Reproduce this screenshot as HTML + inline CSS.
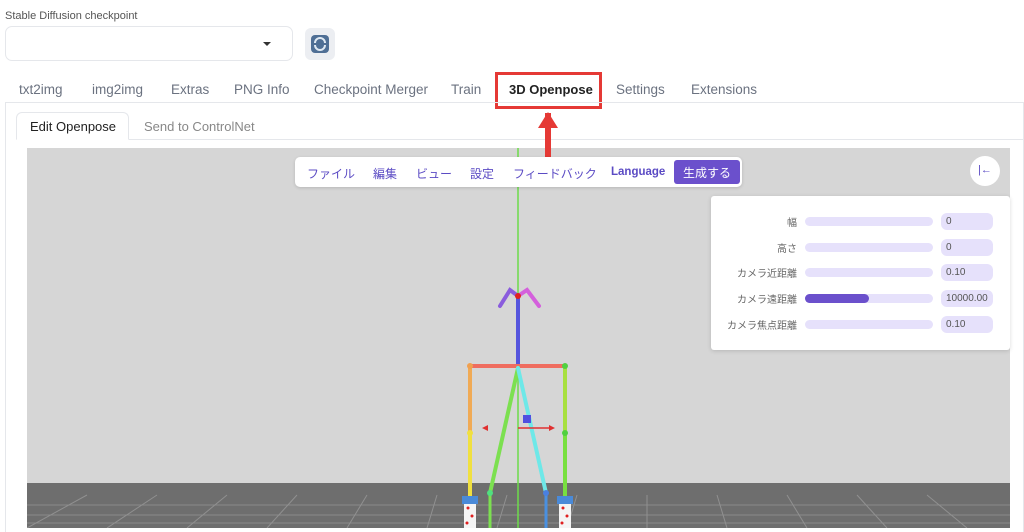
<!DOCTYPE html>
<html><head><meta charset="utf-8"><style>
*{box-sizing:border-box;margin:0;padding:0}
body{width:1024px;height:528px;overflow:hidden;background:#fff;font-family:"Liberation Sans","Noto Sans CJK JP",sans-serif;position:relative}
.a{position:absolute}
.tab{position:absolute;top:82px;font-size:13.5px;color:#6b7280}
.mi{position:absolute;top:165px;font-size:12px;color:#5b4bc4}
.lb{position:absolute;font-size:10px;color:#666;text-align:right;width:90px;left:707px}
.tr{position:absolute;left:805px;width:128px;height:9px;border-radius:5px;background:#e6e1fb}
.bx{position:absolute;left:941px;width:52px;height:17px;border-radius:6px;background:#e6e1fb;font-size:10px;color:#555;padding:3px 0 0 5px}
</style></head><body>
<div class="a" style="left:5px;top:10px;font-size:11px;color:#555">Stable Diffusion checkpoint</div>
<div class="a" style="left:5px;top:26px;width:288px;height:35px;border:1px solid #e5e7eb;border-radius:7px"></div>
<div class="a" style="left:263px;top:42px;border-left:4px solid transparent;border-right:4px solid transparent;border-top:4px solid #333"></div>
<div class="a" style="left:305px;top:28px;width:30px;height:32px;background:#eceef2;border-radius:6px"></div>
<svg class="a" style="left:310px;top:34px" width="20" height="20"><rect x="1" y="1" width="18" height="18" rx="4" fill="#4f6f95"/><path d="M5 9 A5 5 0 0 1 15 9 M15 11 A5 5 0 0 1 5 11" stroke="#dfe9f3" stroke-width="2" fill="none"/></svg>
<div class="tab" style="left:19px">txt2img</div>
<div class="tab" style="left:92px">img2img</div>
<div class="tab" style="left:171px">Extras</div>
<div class="tab" style="left:234px">PNG Info</div>
<div class="tab" style="left:314px">Checkpoint Merger</div>
<div class="tab" style="left:451px">Train</div>
<div class="tab" style="left:509px;color:#222;font-weight:bold;font-size:13px">3D Openpose</div>
<div class="tab" style="left:616px">Settings</div>
<div class="tab" style="left:691px">Extensions</div>
<div class="a" style="left:495px;top:72px;width:107px;height:37px;border:3px solid #e53935"></div>
<div class="a" style="left:5px;top:102px;width:1019px;height:430px;border:1px solid #e5e7eb;border-bottom:none"></div>
<div class="a" style="left:16px;top:112px;width:113px;height:28px;border:1px solid #e5e7eb;border-bottom:1px solid #fff;border-radius:6px 6px 0 0;background:#fff;z-index:2"></div>
<div class="a" style="left:16px;top:139px;width:1008px;border-top:1px solid #e5e7eb"></div>
<div class="a" style="left:30px;top:119px;font-size:13px;color:#222;z-index:3">Edit Openpose</div>
<div class="a" style="left:144px;top:119px;font-size:13px;color:#888">Send to ControlNet</div>
<div class="a" style="left:27px;top:148px;width:983px;height:380px;background:#d6d6d6"></div>
<svg class="a" style="left:27px;top:483px" width="983" height="45">
<rect width="983" height="45" fill="#6e6e6e"/>
<g stroke="#8a8a8a" stroke-width="1">
<line x1="0" y1="22" x2="983" y2="22"/><line x1="0" y1="32" x2="983" y2="32"/><line x1="0" y1="40" x2="983" y2="40"/>
</g>
<g stroke="#909090"><path d="M0 45 L60 12 M80 45 L130 12 M160 45 L200 12 M240 45 L270 12 M320 45 L340 12 M400 45 L410 12 M470 45 L480 12 M540 45 L550 12 M620 45 L620 12 M700 45 L690 12 M780 45 L760 12 M860 45 L830 12 M940 45 L900 12"/></g>
</svg>
<svg class="a" style="left:27px;top:148px" width="983" height="380">
<line x1="491" y1="0" x2="491" y2="380" stroke="#6ddc4a" stroke-width="1.5"/>
<g stroke-linecap="round">
<line x1="491" y1="148" x2="491" y2="220" stroke="#5555dd" stroke-width="4"/>
<path d="M491 148 L483 142 L473 158" stroke="#8a5cdd" stroke-width="4" fill="none"/>
<path d="M491 148 L500 142 L512 158" stroke="#d460dc" stroke-width="4" fill="none"/>
<line x1="443" y1="218" x2="538" y2="218" stroke="#ef6d60" stroke-width="4"/>
<line x1="443" y1="218" x2="443" y2="285" stroke="#f0aa55" stroke-width="4"/>
<line x1="443" y1="285" x2="443" y2="348" stroke="#f0e040" stroke-width="4"/>
<line x1="538" y1="218" x2="538" y2="285" stroke="#a8e040" stroke-width="4"/>
<line x1="538" y1="285" x2="538" y2="348" stroke="#78e040" stroke-width="4"/>
<line x1="491" y1="220" x2="463" y2="345" stroke="#7ce050" stroke-width="4"/>
<line x1="491" y1="220" x2="519" y2="345" stroke="#6ee8e8" stroke-width="4"/>
<line x1="463" y1="345" x2="463" y2="380" stroke="#7ce050" stroke-width="3"/>
<line x1="519" y1="345" x2="519" y2="380" stroke="#4a90e0" stroke-width="3"/>
</g>
<circle cx="491" cy="148" r="3" fill="#e02020"/><circle cx="443" cy="218" r="3" fill="#f0a050"/><circle cx="538" cy="218" r="3" fill="#50d040"/>
<circle cx="538" cy="285" r="3" fill="#50d040"/><circle cx="443" cy="285" r="3" fill="#f0e040"/>
<circle cx="463" cy="345" r="3" fill="#50e080"/><circle cx="519" cy="345" r="3" fill="#4a80e0"/>
<rect x="496" y="267" width="8" height="8" fill="#5050e0"/>
<line x1="491" y1="280" x2="525" y2="280" stroke="#e03030" stroke-width="1.5"/>
<path d="M455 280 L461 277 L461 283Z M528 280 L522 277 L522 283Z" fill="#e03030"/>
<rect x="437" y="348" width="12" height="32" fill="#f4f4f4"/><rect x="532" y="348" width="12" height="32" fill="#f4f4f4"/>
<rect x="435" y="348" width="16" height="8" fill="#4a8ad8"/><rect x="530" y="348" width="16" height="8" fill="#4a8ad8"/>
<g fill="#e02020"><circle cx="441" cy="360" r="1.5"/><circle cx="445" cy="368" r="1.5"/><circle cx="440" cy="375" r="1.5"/><circle cx="536" cy="360" r="1.5"/><circle cx="540" cy="368" r="1.5"/><circle cx="535" cy="375" r="1.5"/></g>
</svg>
<div class="a" style="left:545px;top:113px;width:6px;height:50px;background:#e53935"></div>
<div class="a" style="left:538px;top:112px;border-left:10px solid transparent;border-right:10px solid transparent;border-bottom:16px solid #e53935"></div>
<div class="a" style="left:295px;top:157px;width:447px;height:30px;background:#fff;border-radius:5px;box-shadow:0 1px 3px rgba(0,0,0,.15)"></div>
<div class="mi" style="left:307px">ファイル</div>
<div class="mi" style="left:373px">編集</div>
<div class="mi" style="left:416px">ビュー</div>
<div class="mi" style="left:470px">設定</div>
<div class="mi" style="left:513px">フィードバック</div>
<div class="mi" style="left:611px;top:166px;font-weight:bold;font-size:11.5px">Language</div>
<div class="a" style="left:674px;top:160px;width:66px;height:24px;background:#6b50cc;border-radius:3px;color:#fff;font-size:12px;text-align:center;padding-top:4px">生成する</div>
<div class="a" style="left:970px;top:156px;width:30px;height:30px;background:#fff;border-radius:50%;font-size:11px;color:#5b4bc4;text-align:center;padding-top:8px">|←</div>
<div class="a" style="left:711px;top:196px;width:299px;height:154px;background:#fff;border-radius:3px;box-shadow:0 1px 4px rgba(0,0,0,.15)"></div>
<div class="lb" style="top:214px">幅</div><div class="tr" style="top:217px"></div><div class="bx" style="top:213px">0</div>
<div class="lb" style="top:240px">高さ</div><div class="tr" style="top:243px"></div><div class="bx" style="top:239px">0</div>
<div class="lb" style="top:265px">カメラ近距離</div><div class="tr" style="top:268px"></div><div class="bx" style="top:264px">0.10</div>
<div class="lb" style="top:291px">カメラ遠距離</div><div class="tr" style="top:294px"></div><div class="a" style="left:805px;top:294px;width:64px;height:9px;border-radius:5px;background:#6b50cc"></div><div class="bx" style="top:290px">10000.00</div>
<div class="lb" style="top:317px">カメラ焦点距離</div><div class="tr" style="top:320px"></div><div class="bx" style="top:316px">0.10</div>
</body></html>
